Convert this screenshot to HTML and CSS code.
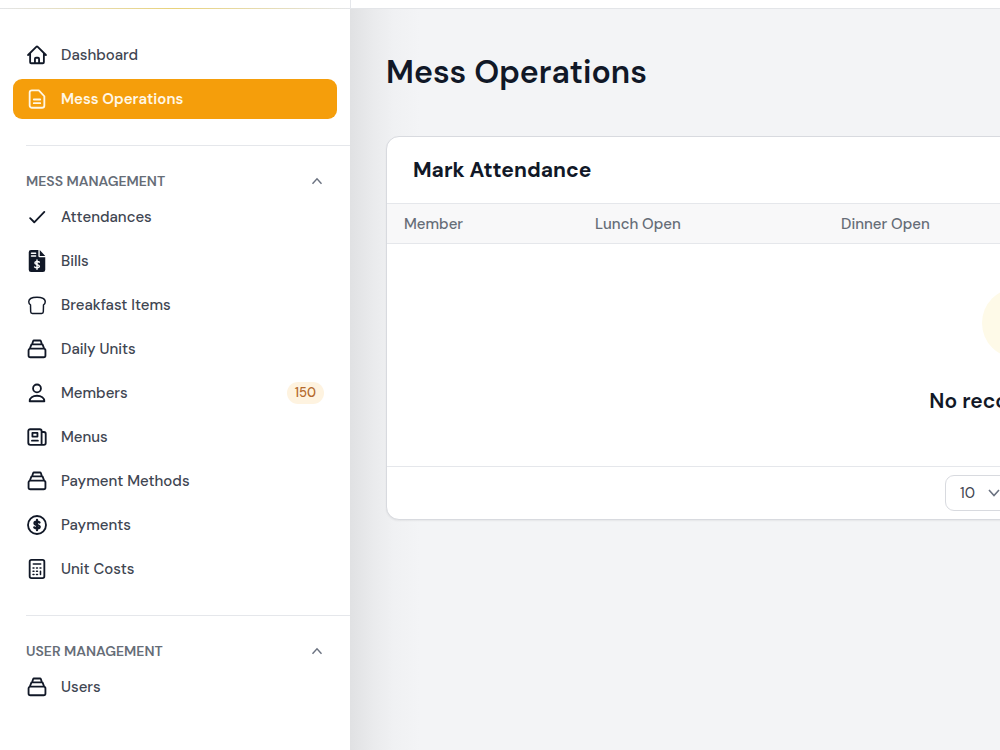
FILE: index.html
```html
<!DOCTYPE html>
<html lang="en">
<head>
<meta charset="utf-8">
<meta name="viewport" content="width=device-width, initial-scale=1">
<title>Mess Operations</title>
<link rel="stylesheet" href="styles.css">
</head>
<body>
<svg class="sprite" aria-hidden="true">
  <symbol id="i-home" viewBox="0 0 24 24"><path d="M2.25 12l8.954-8.955a1.126 1.126 0 011.591 0L21.75 12M4.5 9.75v10.125c0 .621.504 1.125 1.125 1.125H9.75v-4.875c0-.621.504-1.125 1.125-1.125h2.25c.621 0 1.125.504 1.125 1.125V21h4.125c.621 0 1.125-.504 1.125-1.125V9.75M8.25 21h8.25"/></symbol>
  <symbol id="i-doc" viewBox="0 0 24 24"><path d="M14 2.500H6.500a2.500 2.500 0 00-2.500 2.500v14a2.500 2.500 0 002.500 2.500h11a2.500 2.500 0 002.500-2.500V9zM8.500 12.500h7M8.500 16.500h7"/></symbol>
  <symbol id="i-check" viewBox="0 0 24 24"><path d="M4.500 13.250l4.500 4.500L20 6.500"/></symbol>
  <symbol id="i-bill" viewBox="0 0 24 24"><path class="solid" d="M5 0h8.500v6.500A1.500 1.500 0 0015 8h6v13.500A2.500 2.500 0 0118.500 24h-13A2.500 2.500 0 013 21.500V2.500A2.500 2.500 0 015.500 0zM15 0l6 6.500h-6z"/><path class="cut" d="M6 3.500h4.500M6 6.500h4.500M14.500 13.200c-1-.8-4.800-1-4.800 1 0 2.200 4.900 1.300 4.900 3.500 0 2-3.800 1.900-5.200.8M12 11v10"/></symbol>
  <symbol id="i-bread" viewBox="0 0 24 24"><path d="M12 3.500c-4.500 0-9 1-9 5 0 1.600.8 2.700 1.900 3.300l.2 7.500a1.900 1.900 0 001.900 1.900h10a1.900 1.900 0 001.900-1.900l.2-7.500c1.100-.6 1.900-1.700 1.900-3.300 0-4-4.500-5-9-5z"/></symbol>
  <symbol id="i-stack" viewBox="0 0 24 24"><path d="M4.800 11.500h14.400a2 2 0 012 2v5.500a2 2 0 01-2 2H4.800a2 2 0 01-2-2v-5.500a2 2 0 012-2zM4.300 11.200l1.700-4.200h12l1.700 4.200M6.600 7l1.200-3.700a1 1 0 01.9-.6h6.600a1 1 0 01.9.6L17.400 7"/></symbol>
  <symbol id="i-user" viewBox="0 0 24 24"><circle cx="12" cy="7" r="4.300"/><path d="M4 21c0-3.800 3.400-6 8-6s8 2.200 8 6z"/></symbol>
  <symbol id="i-news" viewBox="0 0 24 24"><path d="M4.500 3.500h10.500a2 2 0 012 2v15H4.700A2.200 2.200 0 012.500 18.300V5.500a2 2 0 012-2zM17 6.500h2.500a2 2 0 012 2v10a2 2 0 01-2 2H17M7 7.500h5.500v4H7zM6.500 16h6.500"/></symbol>
  <symbol id="i-dollar" viewBox="0 0 24 24"><circle cx="12" cy="12" r="9.800"/><path class="heavy" d="M14.800 9.300c-1.500-1.500-5.600-1.300-5.600.7 0 2.500 5.800 1.500 5.800 4 0 2.200-4.400 2.200-6 .6M12 6.300v11.400"/></symbol>
  <symbol id="i-calc" viewBox="0 0 24 24"><rect x="4" y="2" width="16" height="20" rx="2"/><path class="fine" d="M8 6.500h8M7.700 11h1M11.500 11h1M15.300 11h1M7.700 14.500h1M11.500 14.500h1M7.700 18h1M11.500 18h1M15.800 14.500v3.500"/></symbol>
  <symbol id="i-up" viewBox="0 0 20 20"><path d="M5 13l5-5.500 5 5.500"/></symbol>
</svg>

<header class="topbar"><div class="topbar-brand"></div></header>
<div class="layout">
  <aside class="sidebar">
    <nav class="nav" aria-label="Main">
      <ul class="nav-list">
        <li><a class="nav-link" href="#"><svg class="icon"><use href="#i-home"/></svg>Dashboard</a></li>
        <li><a class="nav-link active" href="#" aria-current="page"><svg class="icon"><use href="#i-doc"/></svg>Mess Operations</a></li>
      </ul>
      <section class="nav-group">
        <button class="group-toggle" type="button" aria-expanded="true">MESS MANAGEMENT<svg class="chevron"><use href="#i-up"/></svg></button>
        <ul class="nav-list">
          <li><a class="nav-link" href="#"><svg class="icon"><use href="#i-check"/></svg>Attendances</a></li>
          <li><a class="nav-link" href="#"><svg class="icon"><use href="#i-bill"/></svg>Bills</a></li>
          <li><a class="nav-link" href="#"><svg class="icon thin"><use href="#i-bread"/></svg>Breakfast Items</a></li>
          <li><a class="nav-link" href="#"><svg class="icon"><use href="#i-stack"/></svg>Daily Units</a></li>
          <li><a class="nav-link" href="#"><svg class="icon"><use href="#i-user"/></svg>Members<span class="badge">150</span></a></li>
          <li><a class="nav-link" href="#"><svg class="icon"><use href="#i-news"/></svg>Menus</a></li>
          <li><a class="nav-link" href="#"><svg class="icon"><use href="#i-stack"/></svg>Payment Methods</a></li>
          <li><a class="nav-link" href="#"><svg class="icon"><use href="#i-dollar"/></svg>Payments</a></li>
          <li><a class="nav-link" href="#"><svg class="icon"><use href="#i-calc"/></svg>Unit Costs</a></li>
        </ul>
      </section>
      <section class="nav-group">
        <button class="group-toggle" type="button" aria-expanded="true">USER MANAGEMENT<svg class="chevron"><use href="#i-up"/></svg></button>
        <ul class="nav-list">
          <li><a class="nav-link" href="#"><svg class="icon"><use href="#i-stack"/></svg>Users</a></li>
        </ul>
      </section>
    </nav>
  </aside>
  <main class="main">
    <h1 class="page-title">Mess Operations</h1>
    <section class="card">
      <h2 class="card-title">Mark Attendance</h2>
      <table class="table">
        <thead><tr><th class="col-member">Member</th><th class="col-lunch">Lunch Open</th><th>Dinner Open</th></tr></thead>
        <tbody><tr><td colspan="3">
          <div class="empty"><span class="empty-icon"></span><h3 class="empty-title">No records found</h3></div>
        </td></tr></tbody>
      </table>
      <footer class="pager">
        <div class="pager-size"><select class="select" aria-label="Per page"><option>10</option></select><svg class="select-arrow"><use href="#i-up"/></svg></div>
      </footer>
    </section>
  </main>
</div>
</body>
</html>
```
FILE: styles.css
```css
* { box-sizing: border-box; }

body {
  margin: 0;
  min-height: 100vh;
  display: flex;
  flex-direction: column;
  overflow: hidden;
  background: #f3f4f6;
  color: #3f4652;
  font: 500 15px/22px "DM Sans", "Inter", sans-serif;
}

h1, h2, h3, ul { margin: 0; padding: 0; }
ul { list-style: none; }
a { color: inherit; text-decoration: none; }

.sprite { position: absolute; width: 0; height: 0; }

.topbar {
  height: 9px;
  background: #fff;
  border-bottom: 1px solid #e3e5e8;
}

.topbar-brand {
  width: 351px;
  height: 9px;
  border-right: 1px solid #e5e7eb;
  background: linear-gradient(90deg, transparent, #e9d27a 50%, transparent) bottom / 100% 1px no-repeat;
}

.layout { flex: 1; display: flex; }

.sidebar {
  flex: 0 0 350px;
  background: #fff;
}

.nav { padding: 26px 13px; }

.nav-list { display: grid; gap: 4px; }

.nav-link {
  display: flex;
  align-items: center;
  gap: 13px;
  height: 40px;
  padding: 0 13px;
  border-radius: 9px;
}

.nav-link.active { background: #f59e0b; color: #fff7e6; font-weight: 600; }
.nav-link.active .icon { color: #fff7e6; }

.icon {
  flex: none;
  width: 22px;
  height: 22px;
  color: #111827;
  fill: none;
  stroke: currentColor;
  stroke-width: 2;
  stroke-linecap: round;
  stroke-linejoin: round;
}

.icon.thin { stroke-width: 1.6; }
.solid { fill: currentColor; stroke: none; }
.cut { stroke: #fff; stroke-width: 1.6; }
.fine { stroke-width: 1.7; }
.heavy { stroke-width: 2.4; }

.badge {
  margin-left: auto;
  padding: 0 8px;
  border-radius: 12px;
  background: #fef3e0;
  color: #b4692c;
  font-size: 13px;
  line-height: 22px;
}

.nav-group {
  margin: 26px -13px 0 13px;
  padding-right: 13px;
  border-top: 1px solid #e5e7eb;
}

.nav-group .nav-list { margin-left: -13px; }

.group-toggle {
  display: flex;
  align-items: center;
  justify-content: space-between;
  width: 100%;
  height: 22px;
  margin: 24px 0 5px;
  padding: 0 11px 0 0;
  border: 0;
  background: none;
  color: #666d77;
  font: 600 14px/22px "DM Sans", "Inter", sans-serif;
}

.chevron {
  width: 18px;
  height: 18px;
  fill: none;
  stroke: #6b7280;
  stroke-width: 1.6;
}

.main {
  flex: 1;
  min-width: 0;
  padding: 43px 36px;
  background: linear-gradient(90deg, #e0e1e3, #eaebed 24px, #f0f1f3 44px, #f3f4f6 70px);
}

.page-title {
  margin-bottom: 44px;
  color: #111827;
  font-size: 32px;
  font-weight: 600;
  line-height: 40px;
}

.card {
  width: 1262px;
  border: 1px solid #d8dadf;
  border-radius: 13px;
  background: #fff;
  box-shadow: 0 1px 2px rgba(0, 0, 0, .06);
  overflow: hidden;
}

.card-title {
  padding: 20px 26px;
  color: #111827;
  font-size: 21px;
  font-weight: 700;
  line-height: 26px;
}

.table { width: 100%; border-collapse: collapse; table-layout: fixed; }

.table th {
  height: 40px;
  padding: 0 17px;
  border: solid #e5e7eb;
  border-width: 1px 0;
  background: #f8f8f9;
  color: #666d77;
  font-weight: 500;
  text-align: left;
}

.col-member { width: 191px; }
.col-lunch { width: 246px; }
.table td { padding: 0; }

.empty {
  display: flex;
  flex-direction: column;
  align-items: center;
  gap: 30px;
  padding: 44px 0 52px;
}

.empty-icon {
  width: 70px;
  height: 70px;
  border-radius: 50%;
  background: #fefae8;
}

.empty-title {
  color: #111827;
  font-size: 21px;
  font-weight: 600;
  line-height: 26px;
}

.pager {
  display: flex;
  justify-content: center;
  padding: 8px 26px;
  border-top: 1px solid #e5e7eb;
}

.pager-size { position: relative; width: 144px; height: 36px; }

.select {
  width: 68px;
  height: 36px;
  padding: 0 14px;
  border: 1px solid #d8dadf;
  border-radius: 9px;
  appearance: none;
  background: #fff;
  color: #3f4652;
  font: 400 15px/22px "DM Sans", "Inter", sans-serif;
}

.select-arrow {
  position: absolute;
  top: 8px;
  left: 39px;
  width: 20px;
  height: 20px;
  transform: rotate(180deg);
  fill: none;
  stroke: #6b7280;
  stroke-width: 1.6;
  pointer-events: none;
}
```
